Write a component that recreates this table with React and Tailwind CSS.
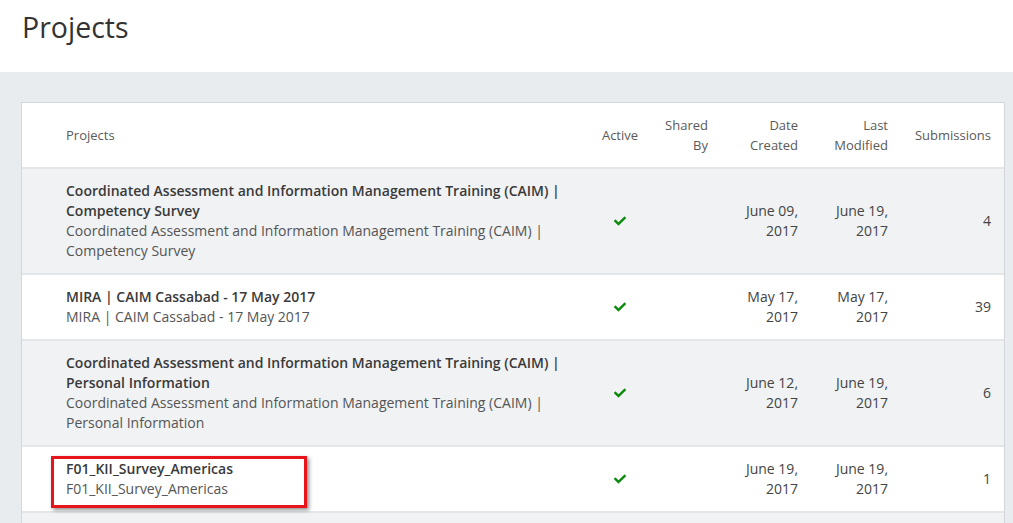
import React from "react";
import { FaCheck } from "react-icons/fa";

const projects = [
  {
    title: "Coordinated Assessment and Information Management Training (CAIM) | Competency Survey",
    created: ["June 09,", "2017"],
    modified: ["June 19,", "2017"],
    submissions: 4,
  },
  {
    title: "MIRA | CAIM Cassabad - 17 May 2017",
    created: ["May 17,", "2017"],
    modified: ["May 17,", "2017"],
    submissions: 39,
  },
  {
    title: "Coordinated Assessment and Information Management Training (CAIM) | Personal Information",
    created: ["June 12,", "2017"],
    modified: ["June 19,", "2017"],
    submissions: 6,
  },
  {
    title: "F01_KII_Survey_Americas",
    created: ["June 19,", "2017"],
    modified: ["June 19,", "2017"],
    submissions: 1,
    highlight: true,
  },
  {
    title: "",
    created: ["", ""],
    modified: ["", ""],
    submissions: "",
  },
];

const TitleBlock = ({ title }) => (
  <div className="w-[500px]">
    <p className="font-semibold text-[#3a3a3a]">{title}</p>
    <p className="text-[#555]">{title}</p>
  </div>
);

const App = () => {
  return (
    <div className="min-h-screen bg-[#e9ecef] font-['Open_Sans',sans-serif] text-[14px] leading-5">
      <div className="h-[72px] bg-white px-[22px] pt-[9px]">
        <h1 className="text-[28.5px] leading-9 text-[#333]">Projects</h1>
      </div>

      <div className="pt-[30px] pl-[21px] pr-[8px]">
        <div className="border border-[#d3d7db] bg-white">
          <table className="w-full table-fixed border-collapse">
            <colgroup>
              <col />
              <col className="w-[60px]" />
              <col className="w-[70px]" />
              <col className="w-[90px]" />
              <col className="w-[90px]" />
              <col className="w-[104px]" />
            </colgroup>
            <thead>
              <tr className="h-[65px] text-[13px] text-[#5a5a5a]">
                <th className="pl-[44px] text-left font-normal">Projects</th>
                <th className="text-center font-normal">Active</th>
                <th className="pr-3 text-right font-normal">
                  Shared
                  <br />
                  By
                </th>
                <th className="pr-3 text-right font-normal">
                  Date
                  <br />
                  Created
                </th>
                <th className="pr-3 text-right font-normal">
                  Last
                  <br />
                  Modified
                </th>
                <th className="pr-[13px] text-right font-normal">Submissions</th>
              </tr>
            </thead>
            <tbody>
              {projects.map((p, i) => (
                <tr
                  key={i}
                  className={`border-t-2 border-[#e4e7ea] ${
                    i % 2 === 0 ? "bg-[#f0f2f4]" : "bg-white"
                  }`}
                >
                  <td className="py-3 pl-[44px] align-middle">
                    {p.title && (
                      <div className="relative">
                        <TitleBlock title={p.title} />
                        {p.highlight && (
                          <div className="absolute -left-[15px] -top-[3px] h-[52px] w-[256px] border-[3px] border-[#e8141b] shadow-[2px_2px_4px_rgba(0,0,0,0.45)]" />
                        )}
                      </div>
                    )}
                    {!p.title && <div className="h-10" />}
                  </td>
                  <td className="text-center align-middle">
                    {p.title && <FaCheck className="mx-auto h-[12px] w-[12px] text-[#0c8a0c]" />}
                  </td>
                  <td />
                  <td className="pr-3 text-right align-middle text-[#444]">
                    {p.created[0]}
                    <br />
                    {p.created[1]}
                  </td>
                  <td className="pr-3 text-right align-middle text-[#444]">
                    {p.modified[0]}
                    <br />
                    {p.modified[1]}
                  </td>
                  <td className="pr-[13px] text-right align-middle text-[#444]">
                    {p.submissions}
                  </td>
                </tr>
              ))}
            </tbody>
          </table>
        </div>
      </div>
    </div>
  );
};

export default App;
